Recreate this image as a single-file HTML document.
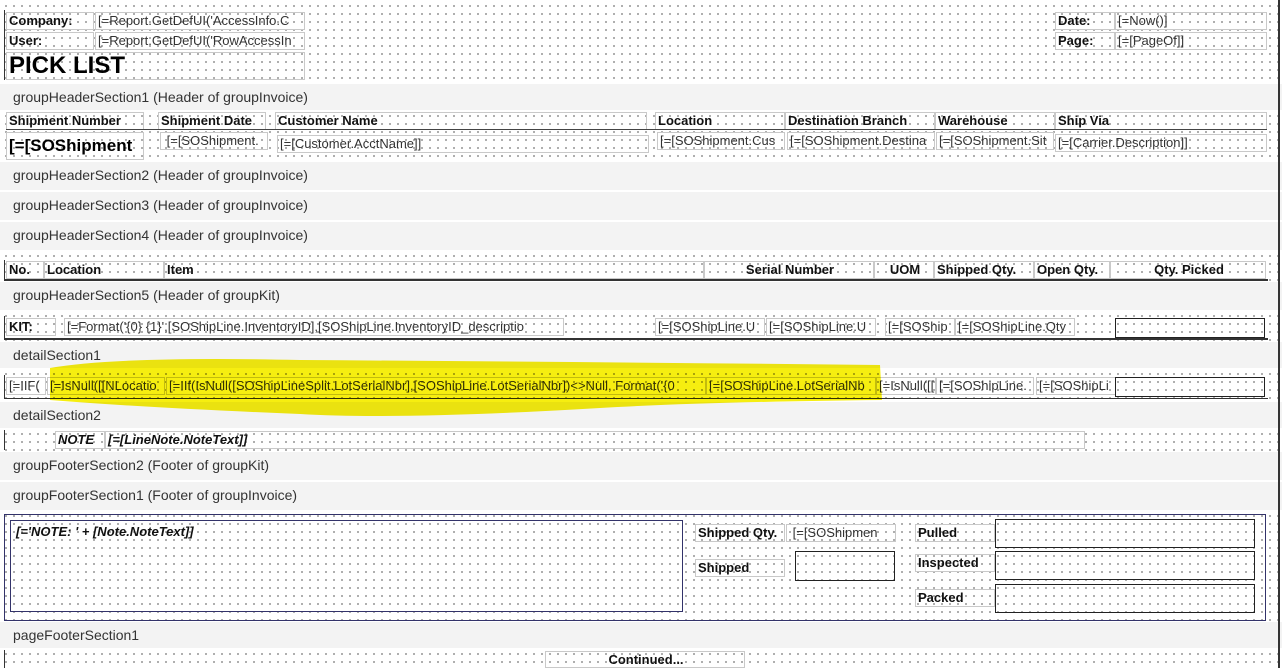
<!DOCTYPE html>
<html><head><meta charset="utf-8"><style>
*{box-sizing:border-box;margin:0;padding:0}
body{width:1282px;height:668px;overflow:hidden;position:relative;background:#fff;font-family:"Liberation Sans",sans-serif;font-size:13px;color:#222}
.d{position:absolute;left:0;width:1282px;background-color:#fff;background-image:radial-gradient(circle,#666 0.7px,transparent 0.9px);background-size:8px 8px;background-position:2px 2px}
.b{position:absolute;left:0;width:1282px;background:#f3f3f3;font-size:14px;color:#333;padding-left:13px;line-height:26px}
.c{position:absolute;border:1px solid #c9c9c9;white-space:nowrap;overflow:hidden;padding-left:2px;line-height:16px;height:18px;color:#333}
.h{font-weight:bold;color:#111}
.k{border:1.5px solid #222}
.hl{position:absolute;border-bottom:2px solid #333;border-left:1px solid #333}
</style></head><body>
<div class="d" style="top:0;height:84px"></div>
<div class="b" style="top:84px;height:26px">groupHeaderSection1 (Header of groupInvoice)</div>
<div class="d" style="top:110px;height:52px"></div>
<div class="b" style="top:162px;height:28px">groupHeaderSection2 (Header of groupInvoice)</div>
<div class="d" style="top:190px;height:2px"></div>
<div class="b" style="top:192px;height:28px">groupHeaderSection3 (Header of groupInvoice)</div>
<div class="d" style="top:220px;height:2px"></div>
<div class="b" style="top:222px;height:28px">groupHeaderSection4 (Header of groupInvoice)</div>
<div class="d" style="top:250px;height:32px"></div>
<div class="b" style="top:282px;height:28px">groupHeaderSection5 (Header of groupKit)</div>
<div class="d" style="top:310px;height:32px"></div>
<div class="b" style="top:342px;height:26px">detailSection1</div>
<div class="d" style="top:368px;height:34px"></div>
<div class="b" style="top:402px;height:26px">detailSection2</div>
<div class="d" style="top:428px;height:24px"></div>
<div class="b" style="top:452px;height:28px">groupFooterSection2 (Footer of groupKit)</div>
<div class="b" style="top:482px;height:28px">groupFooterSection1 (Footer of groupInvoice)</div>
<div class="d" style="top:510px;height:112px"></div>
<div class="b" style="top:622px;height:26px">pageFooterSection1</div>
<div class="d" style="top:648px;height:20px"></div>
<div style="position:absolute;left:1278px;top:0;width:2px;height:668px;background:#333"></div>
<div style="position:absolute;left:4px;top:10px;width:1px;height:70px;background:#333"></div>

<div class="c h" style="left:6px;top:12px;width:88px">Company:</div>
<div class="c" style="left:95px;top:12px;width:210px">[=Report.GetDefUI('AccessInfo.C</div>
<div class="c h" style="left:6px;top:32px;width:88px">User:</div>
<div class="c" style="left:95px;top:32px;width:210px">[=Report.GetDefUI('RowAccessIn</div>
<div class="c h" style="left:6px;top:52px;width:299px;height:28px;font-size:24px;line-height:26px;color:#000">PICK LIST</div>
<div class="c h" style="left:1055px;top:12px;width:60px">Date:</div>
<div class="c" style="left:1115px;top:12px;width:152px">[=Now()]</div>
<div class="c h" style="left:1055px;top:32px;width:60px">Page:</div>
<div class="c" style="left:1115px;top:32px;width:152px">[=[PageOf]]</div>

<div class="c h" style="left:6px;top:112px;width:138px">Shipment Number</div>
<div class="c h" style="left:158px;top:112px;width:108px">Shipment Date</div>
<div class="c h" style="left:275px;top:112px;width:372px">Customer Name</div>
<div class="c h" style="left:655px;top:112px;width:130px">Location</div>
<div class="c h" style="left:785px;top:112px;width:150px">Destination Branch</div>
<div class="c h" style="left:935px;top:112px;width:120px">Warehouse</div>
<div class="c h" style="left:1055px;top:112px;width:212px">Ship Via</div>
<div class="hl" style="left:6px;top:112px;width:1261px;height:18px;border-left:none;border-bottom:1.5px solid #444"></div>
<div class="c h" style="left:6px;top:132px;width:138px;height:28px;font-size:17px;line-height:26px;color:#000">[=[SOShipment</div>
<div class="c" style="left:160px;top:132px;width:108px">&nbsp;[=[SOShipment.</div>
<div class="c" style="left:277px;top:135px;width:372px">[=[Customer.AcctName]]</div>
<div class="c" style="left:657px;top:132px;width:128px">[=[SOShipment.Cus</div>
<div class="c" style="left:787px;top:132px;width:148px">[=[SOShipment.Destina</div>
<div class="c" style="left:936px;top:132px;width:118px">[=[SOShipment.Sit</div>
<div class="c" style="left:1055px;top:134px;width:212px">[=[Carrier.Description]]</div>

<div class="c h" style="left:6px;top:261px;width:38px">No.</div>
<div class="c h" style="left:44px;top:261px;width:120px">Location</div>
<div class="c h" style="left:164px;top:261px;width:540px">Item</div>
<div class="c h" style="left:704px;top:261px;width:170px;text-align:center">Serial Number</div>
<div class="c h" style="left:874px;top:261px;width:60px;text-align:center">UOM</div>
<div class="c h" style="left:934px;top:261px;width:100px">Shipped Qty.</div>
<div class="c h" style="left:1034px;top:261px;width:76px">Open Qty.</div>
<div class="c h" style="left:1110px;top:261px;width:156px;text-align:center">Qty. Picked</div>
<div class="hl" style="left:4px;top:260px;width:1264px;height:21px"></div>

<div class="c h" style="left:6px;top:318px;width:50px">KIT:</div>
<div class="c" style="left:64px;top:318px;width:500px">[=Format('{0} {1}',[SOShipLine.InventoryID],[SOShipLine.InventoryID_descriptio</div>
<div class="c" style="left:655px;top:318px;width:110px">[=[SOShipLine.U</div>
<div class="c" style="left:766px;top:318px;width:110px">[=[SOShipLine.U</div>
<div class="c" style="left:885px;top:318px;width:70px">[=[SOShip</div>
<div class="c" style="left:955px;top:318px;width:120px">[=[SOShipLine.Qty</div>
<div class="c k" style="left:1115px;top:318px;width:150px;height:20px"></div>
<div class="hl" style="left:4px;top:316px;width:1264px;height:24px"></div>

<div class="c" style="left:6px;top:377px;width:40px">[=IIF(</div>
<div class="c" style="left:47px;top:377px;width:118px">[=IsNull([[NLocatio</div>
<div class="c" style="left:166px;top:377px;width:540px">[=IIf(IsNull([SOShipLineSplit.LotSerialNbr],[SOShipLine.LotSerialNbr])&lt;&gt;Null, Format('{0</div>
<div class="c" style="left:706px;top:377px;width:170px">[=[SOShipLine.LotSerialNb</div>
<div class="c" style="left:876px;top:377px;width:60px">[=IsNull([[</div>
<div class="c" style="left:936px;top:377px;width:98px">[=[SOShipLine.</div>
<div class="c" style="left:1036px;top:377px;width:80px">[=[SOShipLi</div>
<div class="c k" style="left:1115px;top:377px;width:150px;height:20px"></div>
<div class="hl" style="left:4px;top:375px;width:1264px;height:24px;border-bottom-width:1.5px"></div>

<div class="c h" style="left:55px;top:431px;width:50px;font-style:italic;font-size:13px">NOTE</div>
<div class="c h" style="left:105px;top:431px;width:980px;font-style:italic;font-size:13px">[=[LineNote.NoteText]]</div>
<div style="position:absolute;left:4px;top:430px;width:1px;height:20px;background:#333"></div>

<div style="position:absolute;left:4px;top:514px;width:1262px;height:107px;border:1.5px solid #33336a"></div>
<div style="position:absolute;left:10px;top:520px;width:673px;height:92px;border:1.5px solid #33336a"></div>
<div class="c h" style="left:14px;top:524px;width:300px;border:none;font-style:italic">[='NOTE: ' + [Note.NoteText]]</div>
<div class="c h" style="left:695px;top:524px;width:90px">Shipped Qty.</div>
<div class="c" style="left:786px;top:524px;width:110px">&nbsp;[=[SOShipmen</div>
<div class="c h" style="left:695px;top:559px;width:90px">Shipped</div>
<div class="c k" style="left:795px;top:551px;width:100px;height:30px"></div>
<div class="c h" style="left:915px;top:524px;width:80px">Pulled</div>
<div class="c h" style="left:915px;top:554px;width:80px">Inspected</div>
<div class="c h" style="left:915px;top:589px;width:80px">Packed</div>
<div class="c k" style="left:995px;top:519px;width:260px;height:29px"></div>
<div class="c k" style="left:995px;top:551px;width:260px;height:29px"></div>
<div class="c k" style="left:995px;top:584px;width:260px;height:29px"></div>

<div class="c h" style="left:545px;top:651px;width:200px;height:17px;text-align:center">Continued...</div>
<div style="position:absolute;left:4px;top:650px;width:1px;height:18px;background:#333"></div>

<svg style="position:absolute;left:0;top:0;mix-blend-mode:multiply" width="1282" height="668">
<path d="M50 368 Q120 356 300 360 Q600 362 880 365 L882 400 Q700 402 600 408 Q400 420 300 414 Q150 408 50 400 Z" fill="#f6ee10"/>
</svg>
</body></html>
